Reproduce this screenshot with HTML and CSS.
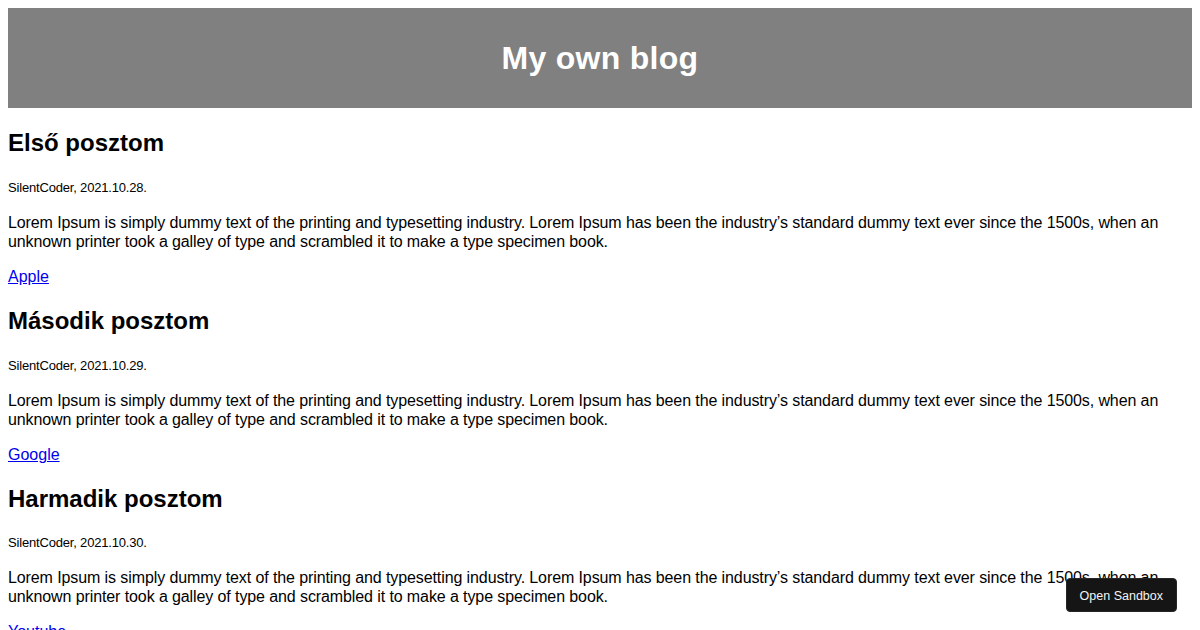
FILE: index.html
```html
<!DOCTYPE html>
<html lang="hu">
<head>
<meta charset="utf-8">
<title>My own blog</title>
<link rel="stylesheet" href="styles.css">
</head>
<body>
<header class="site-header">
  <h1 class="site-title">My own blog</h1>
</header>
<main>
  <article class="post">
    <h2 class="post-title">Első posztom</h2>
    <p class="post-meta"><small>SilentCoder, 2021.10.28.</small></p>
    <p class="post-body">Lorem Ipsum is simply dummy text of the printing and typesetting industry. Lorem Ipsum has been the industry’s standard dummy text ever since the 1500s, when an unknown printer took a galley of type and scrambled it to make a type specimen book.</p>
    <p class="post-link"><a href="#">Apple</a></p>
  </article>
  <article class="post">
    <h2 class="post-title">Második posztom</h2>
    <p class="post-meta"><small>SilentCoder, 2021.10.29.</small></p>
    <p class="post-body">Lorem Ipsum is simply dummy text of the printing and typesetting industry. Lorem Ipsum has been the industry’s standard dummy text ever since the 1500s, when an unknown printer took a galley of type and scrambled it to make a type specimen book.</p>
    <p class="post-link"><a href="#">Google</a></p>
  </article>
  <article class="post">
    <h2 class="post-title">Harmadik posztom</h2>
    <p class="post-meta"><small>SilentCoder, 2021.10.30.</small></p>
    <p class="post-body">Lorem Ipsum is simply dummy text of the printing and typesetting industry. Lorem Ipsum has been the industry’s standard dummy text ever since the 1500s, when an unknown printer took a galley of type and scrambled it to make a type specimen book.</p>
    <p class="post-link"><a href="#">Youtube</a></p>
  </article>
</main>
<a class="sandbox-btn" href="#">Open Sandbox</a>
</body>
</html>
```

FILE: styles.css
```css
body {
  margin: 8px;
  font-family: "Liberation Sans", Arial, sans-serif;
  color: #000;
  background: #fff;
}
.site-header {
  background: #808080;
  height: 100px;
  margin-bottom: 1px;
  display: flex;
  align-items: center;
  justify-content: center;
}
.site-title {
  color: #fff;
  font-size: 32px;
  letter-spacing: 0.28px;
  margin: 0;
}
.post-title {
  font-size: 24px;
  line-height: 29px;
  margin: 19.92px 0;
}
.post-meta, .post-body, .post-link {
  margin: 16px 0;
  line-height: 19px;
}
.post-body {
  letter-spacing: -0.1px;
}
.post-meta small {
  font-size: 13px;
  letter-spacing: -0.18px;
}
a {
  color: #0000ee;
}
.sandbox-btn {
  position: fixed;
  right: 23px;
  bottom: 18px;
  background: #151515;
  color: #f4f4f4;
  text-decoration: none;
  font-family: "Liberation Sans", Arial, sans-serif;
  font-size: 12.5px;
  padding: 0 13px;
  height: 34px;
  line-height: 34px;
  border-radius: 4px;
  border: 1px solid #262626;
  box-sizing: border-box;
}
```
